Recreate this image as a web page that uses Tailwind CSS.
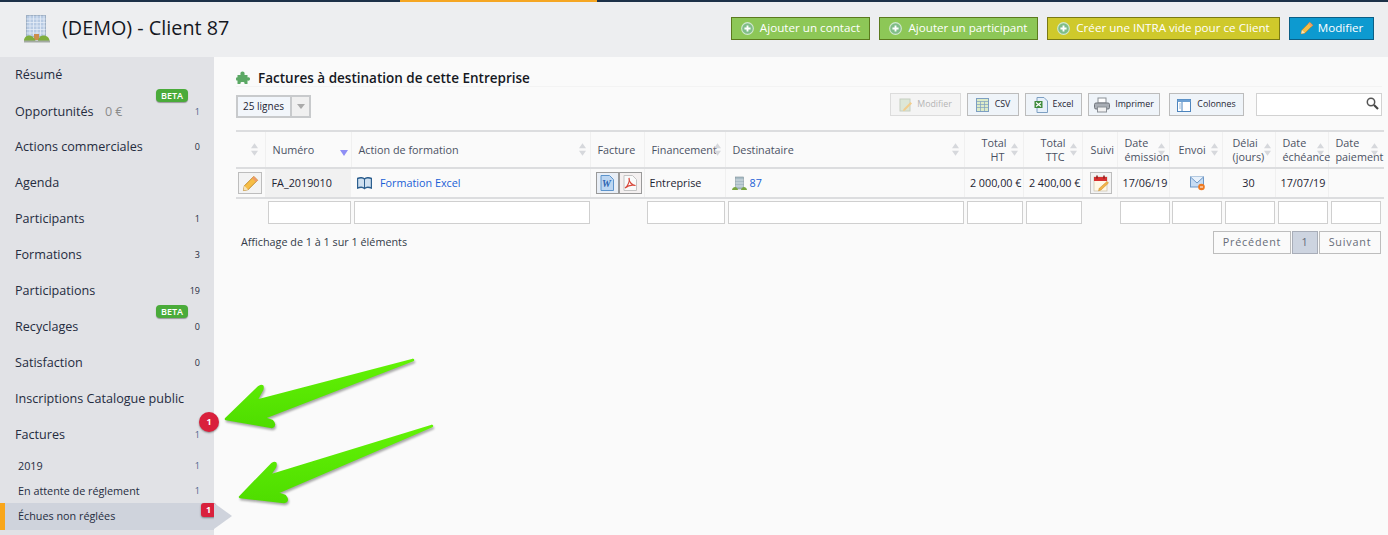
<!DOCTYPE html>
<html lang="fr">
<head>
    <meta charset="UTF-8">
    <meta name="viewport" content="width=device-width, initial-scale=1.0">
    <title>(DEMO) - Client 87</title>
    <script src="https://cdn.jsdelivr.net/npm/@tailwindcss/browser@4"></script>
</head>
<body class="relative h-[535px] w-[1388px] overflow-hidden bg-[#fafafa] font-['Open_Sans',sans-serif] text-[#1e2433]">
    <svg width="0" height="0" class="absolute">
        <defs>
            <symbol id="sort" viewBox="0 0 9 16">
                <path d="M4.500 0 9 6.500H0Z M0 9.500H9L4.500 16Z" fill="#d6d8dc"/>
            </symbol>
            <symbol id="plus" viewBox="0 0 14 14">
                <circle cx="7" cy="7" r="6.300" fill="#7fbd88" stroke="#d2e8d0" stroke-width="1.200"/>
                <path d="M7 3.700v6.600M3.700 7h6.600" stroke="#fff" stroke-width="2"/>
            </symbol>
            <symbol id="pencil" viewBox="0 0 18 18">
                <path d="M12.500 1.500 16.500 5.500 6.500 15.500 1.500 16.500 2.500 11.500Z" fill="#f6bd45" stroke="#b98222" stroke-width=".9"/>
                <path d="M12.500 1.500 16.500 5.500 14.700 7.300 10.700 3.300Z" fill="#ef9a6a"/>
                <path d="M2.500 11.500 1.500 16.500 6.500 15.500Z" fill="#f5e2b8"/>
            </symbol>
            <symbol id="building" viewBox="0 0 26 28">
                <rect x="2.500" y=".5" width="19" height="21" fill="#b7cae3" stroke="#9fb0c4"/>
                <path d="M2.500 4h19M2.500 7.500h19M2.500 11h19M2.500 14.500h19M2.500 18h19M6 .5v20M9.500 .5v20M13 .5v20M16.500 .5v20M20 .5v20" stroke="#e6eef7" stroke-width=".8"/>
                <rect x="10" y="19" width="5" height="6" fill="#cc8d4c"/>
                <path d="M0 26c0-4 3-5.500 5-5.500S10.500 22 11.500 26ZM14 26c.5-4 3-5.500 5.500-5.500S25.500 22 25.500 26Z" fill="#7fae3e"/>
                <rect x="0" y="25.500" width="26" height="2" fill="#a3aaa3"/>
            </symbol>
        </defs>
    </svg>

    <div class="flex h-[2px] bg-[#1c3148]">
        <div class="ml-[400px] w-[197px] bg-[#f5a623]"></div>
    </div>

    <header class="flex h-[55px] items-center bg-[#edeef0] pr-[14px]">
        <svg width="26" height="28" class="ml-[24px] mr-[12px] mb-[2px]"><use href="#building"/></svg>
        <h1 class="mb-[3px] text-[19.800px] leading-none text-[#15181f]">(DEMO) - Client 87</h1>
        <div class="ml-auto mb-[3px] flex gap-[9px] text-[11.650px] text-white">
            <a class="flex h-[23px] w-[139px] items-center justify-center gap-[6px] border border-[#5b7a1e] bg-[#8dc757]"><svg width="13" height="13"><use href="#plus"/></svg>Ajouter un contact</a>
            <a class="flex h-[23px] w-[159px] items-center justify-center gap-[6px] border border-[#5b7a1e] bg-[#8dc757]"><svg width="13" height="13"><use href="#plus"/></svg>Ajouter un participant</a>
            <a class="flex h-[23px] w-[233px] items-center justify-center gap-[6px] border border-[#7a7a14] bg-[#cfc92b]"><svg width="13" height="13"><use href="#plus"/></svg>Créer une INTRA vide pour ce Client</a>
            <a class="flex h-[23px] w-[85px] items-center justify-center gap-[4px] border border-[#0b5f86] bg-[#0d9ad0]"><svg width="14" height="14"><use href="#pencil"/></svg>Modifier</a>
        </div>
    </header>

    <div class="flex h-[478px]">
        <nav class="w-[214px] shrink-0 bg-[#e1e2e6] text-[12.600px] text-[#252c3f]">
            <div class="flex h-9 items-center pl-[15px]">Résumé</div>
            <div class="relative flex h-9 items-center justify-between pl-[15px] pr-[14px] pt-[2px]">
                <span>Opportunités <span class="ml-[8px] text-[#8b8b8b]">0 €</span></span>
                <span class="text-[9px] text-[#50638a]">1</span>
                <span class="absolute left-[156px] top-[-4px] flex h-[13px] w-[32px] items-center justify-center rounded-[4px] bg-[#4aab3a] text-[9px] font-semibold text-white shadow-[0_1px_1px_#0005]">BETA</span>
            </div>
            <div class="flex h-9 items-center justify-between pl-[15px] pr-[14px]"><span>Actions commerciales</span><span class="text-[9px]">0</span></div>
            <div class="flex h-9 items-center pl-[15px]">Agenda</div>
            <div class="flex h-9 items-center justify-between pl-[15px] pr-[14px]"><span>Participants</span><span class="text-[9px]">1</span></div>
            <div class="flex h-9 items-center justify-between pl-[15px] pr-[14px]"><span>Formations</span><span class="text-[9px]">3</span></div>
            <div class="flex h-9 items-center justify-between pl-[15px] pr-[14px]"><span>Participations</span><span class="text-[9px]">19</span></div>
            <div class="relative flex h-9 items-center justify-between pl-[15px] pr-[14px]">
                <span>Recyclages</span><span class="text-[9px]">0</span>
                <span class="absolute left-[156px] top-[-4px] flex h-[13px] w-[32px] items-center justify-center rounded-[4px] bg-[#4aab3a] text-[9px] font-semibold text-white shadow-[0_1px_1px_#0005]">BETA</span>
            </div>
            <div class="flex h-9 items-center justify-between pl-[15px] pr-[14px]"><span>Satisfaction</span><span class="text-[9px]">0</span></div>
            <div class="flex h-9 items-center pl-[15px]">Inscriptions Catalogue public</div>
            <div class="relative flex h-9 items-center justify-between pl-[15px] pr-[14px]">
                <span>Factures</span><span class="text-[9px] text-[#50638a]">1</span>
                <span class="absolute left-[199px] top-[-5px] flex h-[20px] w-[20px] items-center justify-center rounded-full bg-[#d9203c] text-[9px] font-bold text-white shadow-[0_1px_2px_#0006]">1</span>
            </div>
            <div class="flex h-[25px] items-center justify-between pl-[18px] pr-[14px] pt-[1px] text-[10.800px]"><span>2019</span><span class="text-[9px] text-[#50638a]">1</span></div>
            <div class="flex h-[25px] items-center justify-between pl-[18px] pr-[14px] pt-[1px] text-[10.800px]"><span>En attente de réglement</span><span class="text-[9px] text-[#50638a]">1</span></div>
            <div class="relative flex h-[27px] items-center border-l-[5px] border-[#f9a61a] bg-[#cfd3dc] pl-[13px] text-[10.800px]">
                <span>Échues non réglées</span>
                <span class="absolute left-[196px] top-0 flex h-[14px] w-[15px] items-center justify-center rounded-[3px] bg-[#d9203c] text-[9px] font-bold text-white shadow-[0_1px_2px_#0006]">1</span>
                <span class="absolute left-[209px] top-0 h-0 w-0 border-y-[13.500px] border-l-[18px] border-y-transparent border-l-[#cfd3dc]"></span>
            </div>
        </nav>

        <main class="min-w-0 flex-1 pl-[22px] pr-[4px]">
            <div class="mr-[2px] flex h-[30px] items-center gap-[8px] border-b border-[#f3f3f3] pt-[14px] pb-[1px]">
                <svg width="14" height="14" viewBox="0 0 14 14"><path d="M1.500 4H4.500C4 1.500 5 .5 6.500 .5S9 1.500 8.500 4H11.500V6.500C13.500 6 14 7 14 8S13.500 10 11.500 9.500V13H8.500C9 11.500 8 11 6.500 11S4 11.500 4.500 13H1.500V9.500C.5 10 0 9 0 8S.5 6 1.500 6.500Z" fill="#5ba864"/></svg>
                <h2 class="text-[13.500px] font-semibold text-[#15181f]">Factures à destination de cette Entreprise</h2>
            </div>

            <div class="mt-[6px] mr-[2px] flex h-[24px] items-start">
                <div class="mt-[2px] flex h-[23px] w-[75px] border-2 border-[#c8cacc] bg-[#f2f6fb] text-[10px]">
                    <span class="flex flex-1 items-center pl-[5px]">25 lignes</span>
                    <span class="flex w-[19px] items-center justify-center border-l-2 border-[#c8cacc] bg-[#f0f0f0]"><span class="h-0 w-0 border-x-[4.500px] border-t-[5px] border-x-transparent border-t-[#aaa]"></span></span>
                </div>
                <div class="ml-auto flex text-[8.800px]">
                    <a class="flex h-[23px] w-[71px] items-center justify-center gap-[4px] border border-[#dcdcdc] bg-[#f4f4f4] pt-[1px] text-[#b4b4b4]">
                        <svg width="14" height="14" viewBox="0 0 14 14" class="opacity-60"><rect x="1" y="1" width="10" height="12" fill="#cfe0c4" stroke="#a8b8a0"/><path d="M11.500 4 13 5.500 6 12.500 4 13 4.500 11Z" fill="#f2b44a"/></svg>Modifier
                    </a>
                    <a class="ml-[6px] flex h-[23px] w-[52px] items-center justify-center gap-[6px] border border-[#bcbcbc] bg-[#eff4f9] pt-[1px]">
                        <svg width="13" height="14" viewBox="0 0 13 14"><rect x=".5" y=".5" width="12" height="13" fill="#dcebc8" stroke="#7d9fc2"/><path d="M.5 3.500h12M.5 6.500h12M.5 9.500h12M4.500 3.500v10M8.500 3.500v10" stroke="#7d9fc2" stroke-width=".7"/></svg>CSV
                    </a>
                    <a class="ml-[6px] flex h-[23px] w-[57px] items-center justify-center gap-[5px] border border-[#bcbcbc] bg-[#eff4f9] pt-[1px]">
                        <svg width="14" height="16" viewBox="0 0 14 16"><path d="M3 .5h7L13.500 4v11.500H3Z" fill="#e6f0fa" stroke="#7d9fc2"/><path d="M.5 4h8v7h-8Z" fill="#3d8a3a"/><path d="M2 5.500 7 9.500M7 5.500 2 9.500" stroke="#fff" stroke-width="1.200"/></svg>Excel
                    </a>
                    <a class="ml-[6px] flex h-[23px] w-[72px] items-center justify-center gap-[5px] border border-[#bcbcbc] bg-[#eff4f9] pt-[1px]">
                        <svg width="16" height="16" viewBox="0 0 16 16"><rect x="4" y="1" width="8" height="5" fill="#fff" stroke="#8a8f96"/><rect x=".5" y="6" width="15" height="6" rx="1.500" fill="#a9aeb5" stroke="#70757c"/><rect x="3.500" y="10" width="9" height="5" fill="#f2f2f2" stroke="#8a8f96"/></svg>Imprimer
                    </a>
                    <a class="ml-[9px] flex h-[23px] w-[75px] items-center justify-center gap-[6px] border border-[#bcbcbc] bg-[#eff4f9] pt-[1px]">
                        <svg width="14" height="13" viewBox="0 0 14 13"><rect x=".5" y=".5" width="13" height="12" fill="#fff" stroke="#4d84bd"/><rect x=".5" y=".5" width="13" height="2.500" fill="#6da0d3"/><path d="M5 3v9.500" stroke="#4d84bd"/><path d="M2 5h2M2 7h2M2 9h2" stroke="#9fbddc"/></svg>Colonnes
                    </a>
                    <div class="relative ml-[12px] h-[23px] w-[126px] border border-[#d2d2d2] bg-white">
                        <svg width="13" height="13" viewBox="0 0 13 13" class="absolute right-[2px] top-[3px]"><circle cx="5" cy="5" r="3.700" fill="#fff" stroke="#555" stroke-width="1.500"/><path d="M8 8l4 4" stroke="#444" stroke-width="2.200"/></svg>
                    </div>
                </div>
            </div>

            <table class="mt-[13px] w-[1148px] table-fixed border-collapse text-[10.800px]">
                <colgroup>
                    <col class="w-[29px]"><col class="w-[86px]"><col class="w-[239px]"><col class="w-[54px]"><col class="w-[81px]"><col class="w-[239px]"><col class="w-[59px]"><col class="w-[59px]"><col class="w-[35px]"><col class="w-[52px]"><col class="w-[53px]"><col class="w-[53px]"><col class="w-[53px]"><col class="w-[56px]">
                </colgroup>
                <thead class="text-[#4a5163]">
                    <tr class="h-[37px] border-y-2 border-[#dcdddf] leading-[14px] font-normal">
                        <th class="relative border-r border-[#f0f0f0] font-normal"><svg width="7" height="13" class="absolute left-[15px] top-[11px]"><use href="#sort"/></svg></th>
                        <th class="relative border-r border-[#f0f0f0] pl-[7px] text-left font-normal">Numéro<span class="absolute left-[74px] top-[18px] h-0 w-0 border-x-[4px] border-t-[6px] border-x-transparent border-t-[#8f8ff5]"></span></th>
                        <th class="relative border-r border-[#f0f0f0] pl-[7px] text-left font-normal">Action de formation<svg width="7" height="13" class="absolute right-[4px] top-[11px]"><use href="#sort"/></svg></th>
                        <th class="border-r border-[#f0f0f0] pl-[7px] text-left font-normal">Facture</th>
                        <th class="relative border-r border-[#f0f0f0] pl-[7px] text-left font-normal">Financement<svg width="7" height="13" class="absolute right-[4px] top-[11px]"><use href="#sort"/></svg></th>
                        <th class="relative border-r border-[#f0f0f0] pl-[7px] text-left font-normal">Destinataire<svg width="7" height="13" class="absolute right-[5px] top-[11px]"><use href="#sort"/></svg></th>
                        <th class="relative border-r border-[#f0f0f0] pr-[16px] text-right font-normal">Total<br><span class="pr-[2px]">HT</span><svg width="7" height="13" class="absolute right-[5px] top-[11px]"><use href="#sort"/></svg></th>
                        <th class="relative border-r border-[#f0f0f0] pr-[16px] text-right font-normal">Total<br><span class="pr-[1px]">TTC</span><svg width="7" height="13" class="absolute right-[5px] top-[11px]"><use href="#sort"/></svg></th>
                        <th class="border-r border-[#f0f0f0] pl-[8px] text-left font-normal">Suivi</th>
                        <th class="relative border-r border-[#f0f0f0] pl-[7px] text-left font-normal">Date<br>émission<svg width="7" height="13" class="absolute right-[4px] top-[11px]"><use href="#sort"/></svg></th>
                        <th class="relative border-r border-[#f0f0f0] pl-[9px] text-left font-normal">Envoi<svg width="7" height="13" class="absolute right-[4px] top-[11px]"><use href="#sort"/></svg></th>
                        <th class="relative border-r border-[#f0f0f0] pl-[10px] text-left font-normal">Délai<br>(jours)<svg width="7" height="13" class="absolute right-[4px] top-[11px]"><use href="#sort"/></svg></th>
                        <th class="relative border-r border-[#f0f0f0] pl-[7px] text-left font-normal">Date<br>échéance<svg width="7" height="13" class="absolute right-[4px] top-[11px]"><use href="#sort"/></svg></th>
                        <th class="relative pl-[7px] text-left font-normal whitespace-nowrap">Date<br>paiement<svg width="7" height="13" class="absolute right-[6px] top-[11px]"><use href="#sort"/></svg></th>
                    </tr>
                </thead>
                <tbody>
                    <tr class="h-[30px] border-b-2 border-[#dcdddf]">
                        <td class="border-r border-[#f0f0f0]"><span class="ml-[2px] flex h-[22px] w-[24px] items-center justify-center border border-[#bdbdbd] bg-[#f3f3f3]"><svg width="17" height="17"><use href="#pencil"/></svg></span></td>
                        <td class="bg-[#f1f1f1] pl-[6px]">FA_2019010</td>
                        <td class="border-r border-[#f0f0f0] pl-[6px]"><span class="flex items-center gap-[8px]">
                            <svg width="15" height="13" viewBox="0 0 15 13"><path d="M.5 1.500C3 .5 6 .5 7.500 2 9 .5 12 .5 14.500 1.500V11C12 10 9 10 7.500 11.500 6 10 3 10 .5 11Z" fill="#cfe0f0" stroke="#2d5f8f" stroke-width="1.400"/><path d="M7.500 2v9.500" stroke="#2d5f8f"/></svg>
                            <a class="text-[#1a5fd6]">Formation Excel</a></span></td>
                        <td class="border-r border-[#f0f0f0] pl-[5px]"><span class="flex">
                            <span class="flex h-[22px] w-[23px] items-center justify-center border border-[#9a9a9a] bg-[#e8eef6]"><svg width="14" height="16" viewBox="0 0 14 16"><path d="M1 .5h8.500L13.500 4.500v11H1Z" fill="#bcd6f2" stroke="#5d94cc"/><text x="2" y="12" font-size="10" font-weight="700" font-style="italic" font-family="Liberation Serif, serif" fill="#2a62b0">W</text></svg></span>
                            <span class="flex h-[22px] w-[23px] items-center justify-center border border-[#9a9a9a] bg-[#f4f0f0]"><svg width="14" height="16" viewBox="0 0 14 16"><path d="M1 .5h8.500L13.500 4.500v11H1Z" fill="#fafafa" stroke="#c4c4c4"/><path d="M2 13C5 11 7 6 6 3 6 7 9 10.500 12.500 10.500 9 9.500 5 10.500 2 13Z" fill="none" stroke="#d8483c" stroke-width="1.200"/></svg></span>
                        </span></td>
                        <td class="border-r border-[#f0f0f0] pl-[5px]">Entreprise</td>
                        <td class="border-r border-[#f0f0f0] pl-[6px]"><span class="flex items-center gap-[3px]"><svg width="15" height="16" viewBox="0 0 15 16"><rect x="3.500" y="2" width="8" height="12" fill="#a9bcc6" stroke="#7d8f98" stroke-width=".6"/><path d="M3.500 5h8M3.500 8h8M3.500 11h8" stroke="#e1e8ec" stroke-width=".8"/><path d="M0 15c0-2 2-3 3-3s3 1 3 3ZM9 15c0-2 2-3 3-3s3 1 3 3Z" fill="#79a640"/></svg><a class="text-[#1a5fd6]">87</a></span></td>
                        <td class="border-r border-[#f0f0f0] pr-[1px] text-right whitespace-nowrap">2 000,00 €</td>
                        <td class="border-r border-[#f0f0f0] pr-[1px] text-right whitespace-nowrap">2 400,00 €</td>
                        <td class="border-r border-[#f0f0f0] pl-[7px]"><span class="flex h-[22px] w-[22px] items-center justify-center border border-[#bdbdbd] bg-[#f3f3f3]"><svg width="16" height="17" viewBox="0 0 16 17"><rect x="1" y="2" width="13" height="14" fill="#fff8e6" stroke="#c9c0ac" stroke-width=".7"/><rect x="1" y="2" width="13" height="4" fill="#d62f2f"/><path d="M4 .5v3M11 .5v3" stroke="#8a1f1f" stroke-width="1.500"/><path d="M14 6.500 15.500 8 8 15 5.500 15.800 6.300 13.300Z" fill="#f2b44a" stroke="#c98a22" stroke-width=".5"/></svg></span></td>
                        <td class="border-r border-[#f0f0f0] pl-[5px] whitespace-nowrap">17/06/19</td>
                        <td class="border-r border-[#f0f0f0] pl-[20px]"><svg width="16" height="16" viewBox="0 0 16 16"><rect x=".5" y="2" width="13" height="10" fill="#c7dcf3" stroke="#6d97c6"/><path d="M.5 2 7 8 13.500 2" fill="#e8f1fb" stroke="#6d97c6"/><circle cx="11.500" cy="12" r="3.300" fill="#ee7a22"/><path d="M10 12h3" stroke="#fff"/></svg></td>
                        <td class="border-r border-[#f0f0f0] text-center">30</td>
                        <td class="border-r border-[#f0f0f0] pl-[5px] whitespace-nowrap">17/07/19</td>
                        <td></td>
                    </tr>
                    <tr class="h-[28px]">
                        <td></td>
                        <td class="px-[3px]"><input class="block h-[23px] w-[83px] border border-[#cfcfcf] bg-white"></td>
                        <td class="px-[3px]"><input class="block h-[23px] w-[236px] border border-[#cfcfcf] bg-white"></td>
                        <td></td>
                        <td class="px-[3px]"><input class="block h-[23px] w-[78px] border border-[#cfcfcf] bg-white"></td>
                        <td class="px-[3px]"><input class="block h-[23px] w-[236px] border border-[#cfcfcf] bg-white"></td>
                        <td class="px-[3px]"><input class="block h-[23px] w-[56px] border border-[#cfcfcf] bg-white"></td>
                        <td class="px-[3px]"><input class="block h-[23px] w-[56px] border border-[#cfcfcf] bg-white"></td>
                        <td></td>
                        <td class="px-[3px]"><input class="block h-[23px] w-[50px] border border-[#cfcfcf] bg-white"></td>
                        <td class="px-[3px]"><input class="block h-[23px] w-[50px] border border-[#cfcfcf] bg-white"></td>
                        <td class="px-[3px]"><input class="block h-[23px] w-[50px] border border-[#cfcfcf] bg-white"></td>
                        <td class="px-[3px]"><input class="block h-[23px] w-[50px] border border-[#cfcfcf] bg-white"></td>
                        <td class="px-[3px]"><input class="block h-[23px] w-[50px] border border-[#cfcfcf] bg-white"></td>
                    </tr>
                </tbody>
            </table>

            <div class="mt-[5px] flex w-[1145px] items-center justify-between">
                <span class="pl-[5px] text-[10.800px] text-[#333a48]">Affichage de 1 à 1 sur 1 éléments</span>
                <div class="flex h-[23px] text-[10.800px] tracking-[.8px] text-[#666c78]">
                    <a class="flex w-[78px] items-center justify-center border border-[#bdbdbd] bg-[#fafafa]">Précédent</a>
                    <a class="ml-[1px] flex w-[26px] items-center justify-center border border-[#a8adb8] bg-[#cdd4e0]">1</a>
                    <a class="ml-[1px] flex w-[62px] items-center justify-center border border-[#bdbdbd] bg-[#fafafa]">Suivant</a>
                </div>
            </div>
        </main>
    </div>

    <!-- flèches d'annotation -->
    <svg width="1388" height="535" class="pointer-events-none absolute left-0 top-0 drop-shadow-[1px_2px_1px_#0005]">
        <defs>
            <linearGradient id="vert" x1="0" y1="0" x2="0" y2="1">
                <stop offset="0" stop-color="#62f205"/>
                <stop offset="1" stop-color="#4fdd00"/>
            </linearGradient>
        </defs>
        <path d="M226 419 259 387Q264 384 262 390L256 401 413 360 263 418 272 421Q276 425 272 427Z" fill="url(#vert)" stroke="url(#vert)" stroke-width="2.500" stroke-linejoin="round"/>
        <path d="M240 497 272 464Q277 461 275 467L269 476 432 426 276 493 285 496Q289 501 284 502Z" fill="url(#vert)" stroke="url(#vert)" stroke-width="2.500" stroke-linejoin="round"/>
    </svg>
</body>
</html>
